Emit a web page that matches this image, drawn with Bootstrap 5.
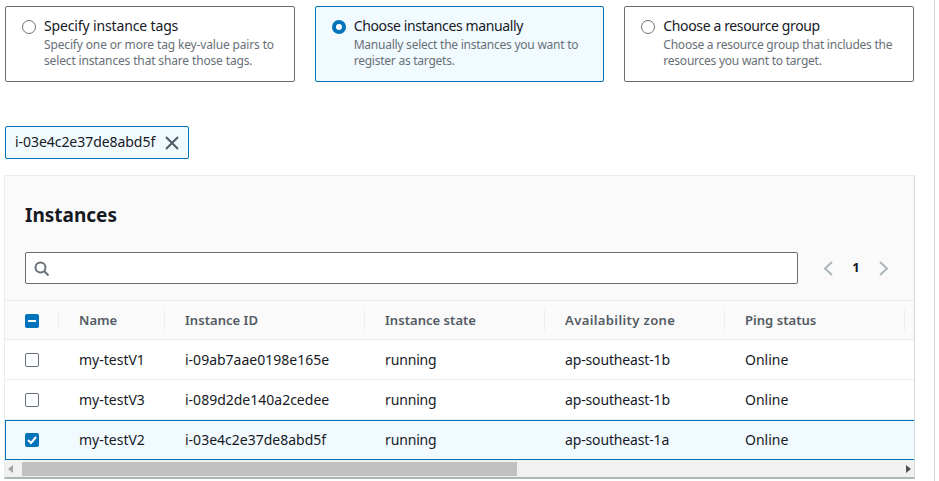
<!DOCTYPE html>
<html lang="en">
<head>
<meta charset="utf-8">
<title>Instances</title>
<link href="https://cdn.jsdelivr.net/npm/bootstrap@5.3.0/dist/css/bootstrap.min.css" rel="stylesheet">
<style>
html,body{height:481px;overflow:hidden;background:#fff;}
body{font-family:"Noto Sans","Open Sans",sans-serif;font-size:14px;color:#16191f;}
.page-wrap{width:935px;height:481px;border-right:1px solid #d5dbdb;padding:6px 0 0 5px;overflow:hidden;}
.tiles{display:flex;gap:20px;width:909px;}
.tile{flex:1 1 0;height:76px;border:1px solid #687078;border-radius:2px;padding:8px 8px 0 16px;display:flex;gap:8px;}
.tile-on{border-color:#0073bb;background:#f1faff;}
.radio-off{width:14px;height:14px;border:1px solid #687078;border-radius:50%;margin-top:5px;flex:none;background:#fff;}
.radio-on{width:14px;height:14px;border:4px solid #0073bb;border-radius:50%;margin-top:5px;flex:none;background:#fff;}
.tile-title{font-size:14px;line-height:22px;letter-spacing:-.14px;}
.tile-desc{font-size:12px;line-height:16px;color:#687078;white-space:nowrap;letter-spacing:-.15px;}
.tile-tight .tile-title{letter-spacing:-.37px;}
.tile-tight .tile-desc{letter-spacing:-.24px;}
.token{display:inline-flex;align-items:center;gap:10px;margin-top:44px;height:33px;width:184px;border:1px solid #0073bb;border-radius:2px;background:#f1faff;padding:0 8px 0 9px;font-size:14px;}
.token-label{letter-spacing:-.05px;padding-bottom:2px;}
.panel{margin:16px 0 0 -1px;width:911px;height:304px;border:1px solid #eaeded;border-right-color:#d5dbdb;border-bottom:2px solid #aab7b8;overflow:hidden;}
.panel-head{background:#fafafa;height:125px;padding:25px 20px 0 20px;border-bottom:1px solid #eaeded;}
.panel-title{font-size:19px;font-weight:700;line-height:28px;margin:0;}
.search-row{display:flex;align-items:center;margin-top:23px;}
.search-box{width:773px;height:32px;background:#fff;border:1px solid #687078;border-radius:2px;display:flex;align-items:center;padding-left:8px;}
.pager{display:flex;align-items:center;margin-left:25px;gap:20px;font-size:13px;font-weight:700;}
.pager-num{width:6px;display:flex;justify-content:center;}
.grid-scroll{overflow:hidden;height:159px;}
.tbl{table-layout:fixed;width:1000px;margin:0;border-collapse:separate;border-spacing:0;}
.col-check{width:54px;}
.col-name{width:106px;}
.col-id{width:200px;}
.col-std{width:180px;}
.tbl th,.tbl td{padding:0 0 0 20px;vertical-align:middle;box-shadow:none;background:transparent;color:#16191f;border:0;font-size:14px;}
.tbl thead th{height:39px;background:#fafafa;font-weight:600;font-size:13.1px;color:#545b64;border-bottom:1px solid #eaeded;position:relative;padding-top:1px;}
.tbl thead th.zone-head{letter-spacing:.35px;}
.tbl thead th:not(:last-child)::after{content:"";position:absolute;right:0;top:9px;height:20px;width:1px;background:#eaeded;}
.tbl tbody td{height:40px;border-bottom:1px solid #eaeded;}
.tbl tbody td.tight-cell{letter-spacing:-.15px;}
.tbl tbody tr.picked td{background:#f1faff;border-top:1px solid #0073bb;border-bottom:1px solid #0073bb;padding-bottom:1px;}
.tbl tbody tr.picked td:first-child{box-shadow:inset 1px 0 0 #0073bb;}
.box{display:block;width:14px;height:14px;border:1px solid #687078;border-radius:2px;background:#fff;}
.box-on{border:0;background:#0073bb;border-radius:2px;display:block;width:14px;height:14px;}
.bar{height:17px;background:#f1f1f1;display:flex;align-items:center;}
.bar-track{flex:1;height:14px;}
.bar-thumb{height:100%;width:495px;margin-left:6px;background:#c1c1c1;}
.bar-btn{width:11px;flex:none;display:flex;justify-content:center;}
</style>
</head>
<body>
<div class="page-wrap">
  <div class="tiles">
    <div class="tile"><span class="radio-off"></span><div><div class="tile-title">Specify instance tags</div><div class="tile-desc">Specify one or more tag key-value pairs to<br>select instances that share those tags.</div></div></div>
    <div class="tile tile-on tile-tight"><span class="radio-on"></span><div><div class="tile-title">Choose instances manually</div><div class="tile-desc">Manually select the instances you want to<br>register as targets.</div></div></div>
    <div class="tile tile-tight"><span class="radio-off"></span><div><div class="tile-title">Choose a resource group</div><div class="tile-desc">Choose a resource group that includes the<br>resources you want to target.</div></div></div>
  </div>
  <div class="token"><span class="token-label">i-03e4c2e37de8abd5f</span><svg width="14" height="14" viewBox="0 0 14 14" fill="none" stroke="#545b64" stroke-width="2"><path d="M1 1l12 12M13 1L1 13"/></svg></div>
  <div class="panel">
    <div class="panel-head">
      <h2 class="panel-title">Instances</h2>
      <div class="search-row">
        <div class="search-box"><svg width="15" height="15" viewBox="0 0 15 15" fill="none" stroke="#687078" stroke-width="2"><circle cx="6.5" cy="6.5" r="5"/><path d="M10 10l4.5 4.5"/></svg></div>
        <div class="pager">
          <svg width="10" height="15" viewBox="0 0 10 15" fill="none" stroke="#aab7b8" stroke-width="2"><path d="M9 1L2 7.5 9 14"/></svg>
          <span class="pager-num">1</span>
          <svg width="10" height="15" viewBox="0 0 10 15" fill="none" stroke="#aab7b8" stroke-width="2"><path d="M1 1l7 6.5L1 14"/></svg>
        </div>
      </div>
    </div>
    <div class="grid-scroll">
      <table class="table tbl">
        <colgroup><col class="col-check"><col class="col-name"><col class="col-id"><col class="col-std"><col class="col-std"><col class="col-std"><col></colgroup>
        <thead><tr>
          <th><span class="box-on"><svg width="14" height="14" viewBox="0 0 14 14" class="d-block" stroke="#fff" stroke-width="2"><path d="M3 7h8"/></svg></span></th>
          <th>Name</th><th>Instance ID</th><th>Instance state</th><th class="zone-head">Availability zone</th><th>Ping status</th><th></th>
        </tr></thead>
        <tbody>
          <tr><td><span class="box"></span></td><td>my-testV1</td><td>i-09ab7aae0198e165e</td><td class="tight-cell">running</td><td class="tight-cell">ap-southeast-1b</td><td>Online</td><td></td></tr>
          <tr><td><span class="box"></span></td><td>my-testV3</td><td>i-089d2de140a2cedee</td><td class="tight-cell">running</td><td class="tight-cell">ap-southeast-1b</td><td>Online</td><td></td></tr>
          <tr class="picked"><td><span class="box-on"><svg width="14" height="14" viewBox="0 0 14 14" class="d-block" fill="none" stroke="#fff" stroke-width="2"><path d="M3 7l3 3 5-6"/></svg></span></td><td>my-testV2</td><td>i-03e4c2e37de8abd5f</td><td class="tight-cell">running</td><td class="tight-cell">ap-southeast-1a</td><td>Online</td><td></td></tr>
        </tbody>
      </table>
    </div>
    <div class="bar">
      <div class="bar-btn"><svg width="5" height="8" viewBox="0 0 5 8"><path d="M5 0v8L0 4z" fill="#a3a3a3"/></svg></div>
      <div class="bar-track"><div class="bar-thumb"></div></div>
      <div class="bar-btn"><svg width="5" height="8" viewBox="0 0 5 8"><path d="M0 0v8l5-4z" fill="#505050"/></svg></div>
    </div>
  </div>
</div>
<script src="https://cdn.jsdelivr.net/npm/bootstrap@5.3.0/dist/js/bootstrap.bundle.min.js"></script>
</body>
</html>
